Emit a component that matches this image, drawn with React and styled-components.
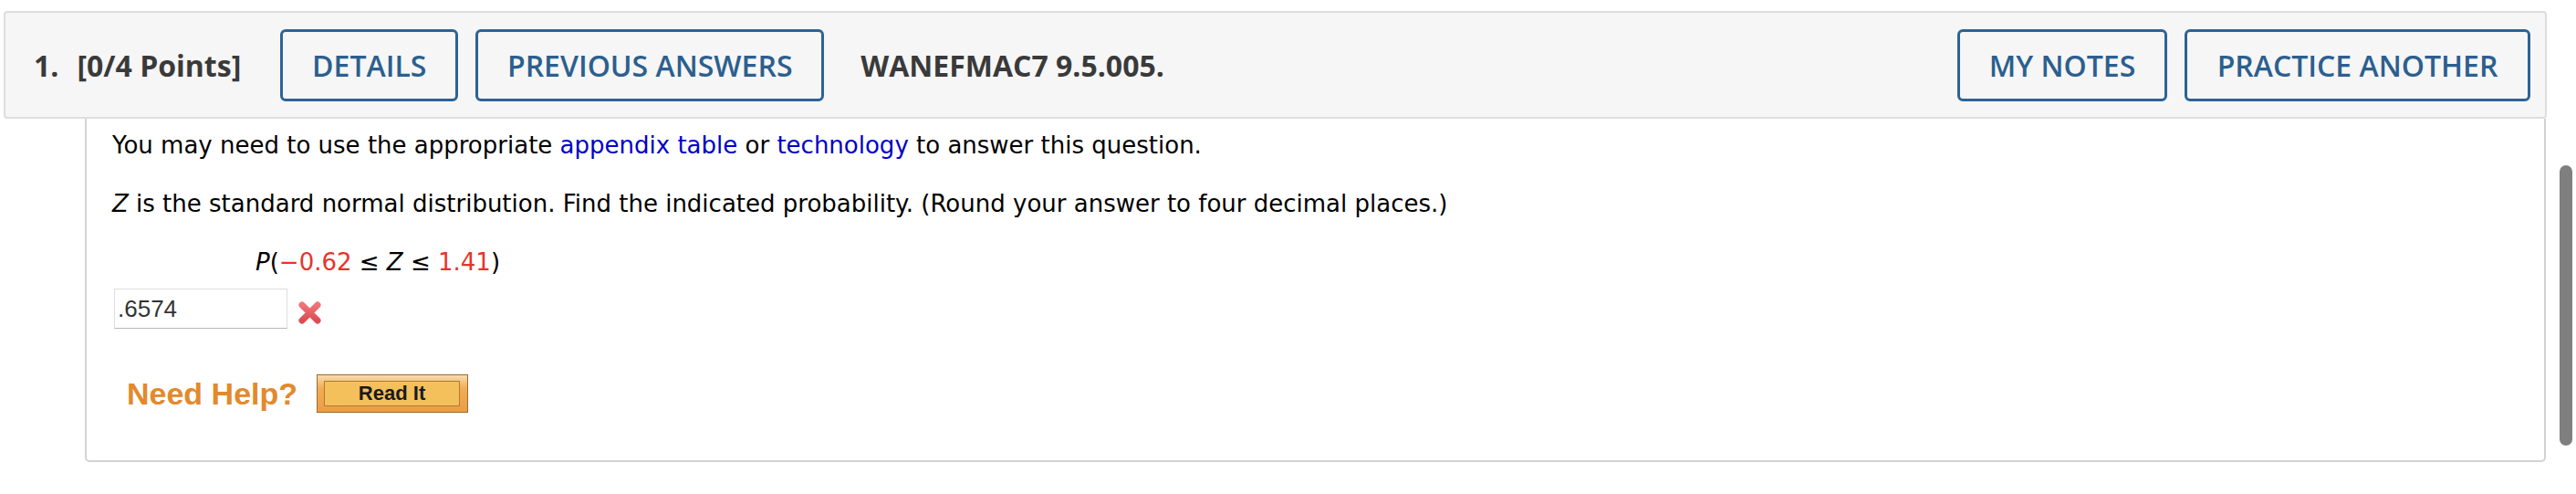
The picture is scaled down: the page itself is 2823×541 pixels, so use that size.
import React from "react";
import styled, { createGlobalStyle } from "styled-components";

const GlobalStyle = createGlobalStyle`
  body {
    margin: 0;
    background: #ffffff;
    overflow: hidden;
  }
`;

const headerButtons = [
  { id: "details", label: "DETAILS", w: 195 },
  { id: "prev", label: "PREVIOUS ANSWERS", w: 382 },
];

const rightButtons = [
  { id: "notes", label: "MY NOTES", w: 230 },
  { id: "practice", label: "PRACTICE ANOTHER", w: 379 },
];

export default function App() {
  return (
    <Page>
      <GlobalStyle />
      <Header>
        <Num>1.</Num>
        <Points>[0/4 Points]</Points>
        <ButtonGroup $first={43}>
          {headerButtons.map((b) => (
            <HeadButton key={b.id} $w={b.w}>
              {b.label}
            </HeadButton>
          ))}
        </ButtonGroup>
        <Title>WANEFMAC7 9.5.005.</Title>
        <Spacer />
        <ButtonGroup $first={0}>
          {rightButtons.map((b) => (
            <HeadButton key={b.id} $w={b.w}>
              {b.label}
            </HeadButton>
          ))}
        </ButtonGroup>
      </Header>

      <Panel>
        <Para>
          You may need to use the appropriate <Link>appendix table</Link> or{" "}
          <Link>technology</Link> to answer this question.
        </Para>
        <Para>
          <i>Z</i> is the standard normal distribution. Find the indicated
          probability. (Round your answer to four decimal places.)
        </Para>
        <Formula>
          <i>P</i>(<Red>&minus;0.62</Red> &le; <i>Z</i> &le; <Red>1.41</Red>)
        </Formula>

        <AnswerRow>
          <AnswerInput readOnly value=".6574" />
          <WrongMark viewBox="0 0 27 27">
            <defs>
              <linearGradient id="xg" x1="0" y1="0" x2="0" y2="1">
                <stop offset="0" stopColor="#ee7478" />
                <stop offset="1" stopColor="#dc4c52" />
              </linearGradient>
            </defs>
            <path
              d="M5 5 L22 22 M22 5 L5 22"
              stroke="url(#xg)"
              strokeWidth="7"
              strokeLinecap="round"
              fill="none"
            />
          </WrongMark>
        </AnswerRow>

        <HelpRow>
          <NeedHelp>Need Help?</NeedHelp>
          <ReadIt>
            <ReadItInner>Read It</ReadItInner>
          </ReadIt>
        </HelpRow>
      </Panel>

      <ScrollThumb />
    </Page>
  );
}

const Page = styled.div`
  box-sizing: border-box;
  padding: 12px 0 0 4px;
  width: 2823px;
  height: 541px;
  position: relative;
`;

const Header = styled.div`
  display: flex;
  align-items: center;
  box-sizing: border-box;
  width: 2787px;
  height: 118px;
  padding: 0 16px 0 31px;
  background: #f6f6f6;
  border: 2px solid #dedede;
  border-radius: 4px;
  font-family: "Open Sans", "Liberation Sans", sans-serif;
  color: #3a3a3a;
`;

const Num = styled.span`
  font-size: 32px;
  font-weight: 700;
`;

const Points = styled.span`
  margin-left: 20px;
  font-size: 32px;
  font-weight: 700;
`;

const Title = styled.span`
  margin-left: 40px;
  font-size: 32px;
  font-weight: 700;
`;

const Spacer = styled.div`
  flex: 1;
`;

const ButtonGroup = styled.div`
  display: flex;
  gap: 19px;
  margin-left: ${(p) => p.$first}px;
`;

const HeadButton = styled.button`
  box-sizing: border-box;
  width: ${(p) => p.$w}px;
  height: 79px;
  padding: 0;
  background: transparent;
  border: 3px solid #2d6396;
  border-radius: 6px;
  color: #2c5f8f;
  font-family: "Open Sans", "Liberation Sans", sans-serif;
  font-size: 32px;
  font-weight: 600;
  cursor: pointer;
`;

const Panel = styled.div`
  box-sizing: border-box;
  margin-left: 89px;
  width: 2697px;
  height: 376px;
  padding: 14px 0 0 28px;
  border: 2px solid #d2d2d2;
  border-top: none;
  border-radius: 0 0 5px 5px;
  font-family: "DejaVu Sans", Verdana, sans-serif;
  font-size: 26px;
  color: #000;
`;

const Para = styled.p`
  margin: 0 0 34px;
  line-height: 30px;
`;

const Formula = styled.p`
  margin: 0 0 14px;
  padding-left: 157px;
  line-height: 30px;
`;

const Link = styled.span`
  color: #0000c8;
`;

const Red = styled.span`
  color: #e8332b;
`;

const AnswerRow = styled.div`
  display: flex;
  align-items: flex-start;
`;

const AnswerInput = styled.input`
  box-sizing: border-box;
  width: 190px;
  height: 44px;
  margin: 0 0 0 2px;
  padding: 0 0 0 3px;
  border: 1px solid #dddddd;
  border-bottom-color: #b8b8b8;
  border-radius: 0;
  background: #fff;
  color: #333;
  font-family: "Liberation Sans", Arial, sans-serif;
  font-size: 26px;
  outline: none;
`;

const WrongMark = styled.svg`
  width: 27px;
  height: 27px;
  margin: 13px 0 0 11px;
`;

const HelpRow = styled.div`
  display: flex;
  align-items: center;
  margin-top: 50px;
  padding-left: 16px;
`;

const NeedHelp = styled.span`
  font-family: "Liberation Sans", Arial, sans-serif;
  font-size: 34px;
  font-weight: 700;
  color: #e3892c;
`;

const ReadIt = styled.div`
  box-sizing: border-box;
  display: flex;
  width: 166px;
  height: 42px;
  margin-left: 21px;
  padding: 6px 8px 6px 7px;
  border: 1px solid #9b6a2c;
  background: linear-gradient(#f9dcae 0%, #f1ad55 35%, #ec9d44 100%);
`;

const ReadItInner = styled.div`
  flex: 1;
  display: flex;
  align-items: center;
  justify-content: center;
  border: 1px solid #b07b35;
  background: #f3c05c;
  font-family: "Liberation Sans", Arial, sans-serif;
  font-size: 22px;
  font-weight: 700;
  color: #1a1a1a;
`;

const ScrollThumb = styled.div`
  position: absolute;
  left: 2805px;
  top: 181px;
  width: 14px;
  height: 307px;
  border-radius: 7px;
  background: #7f7f7f;
`;
